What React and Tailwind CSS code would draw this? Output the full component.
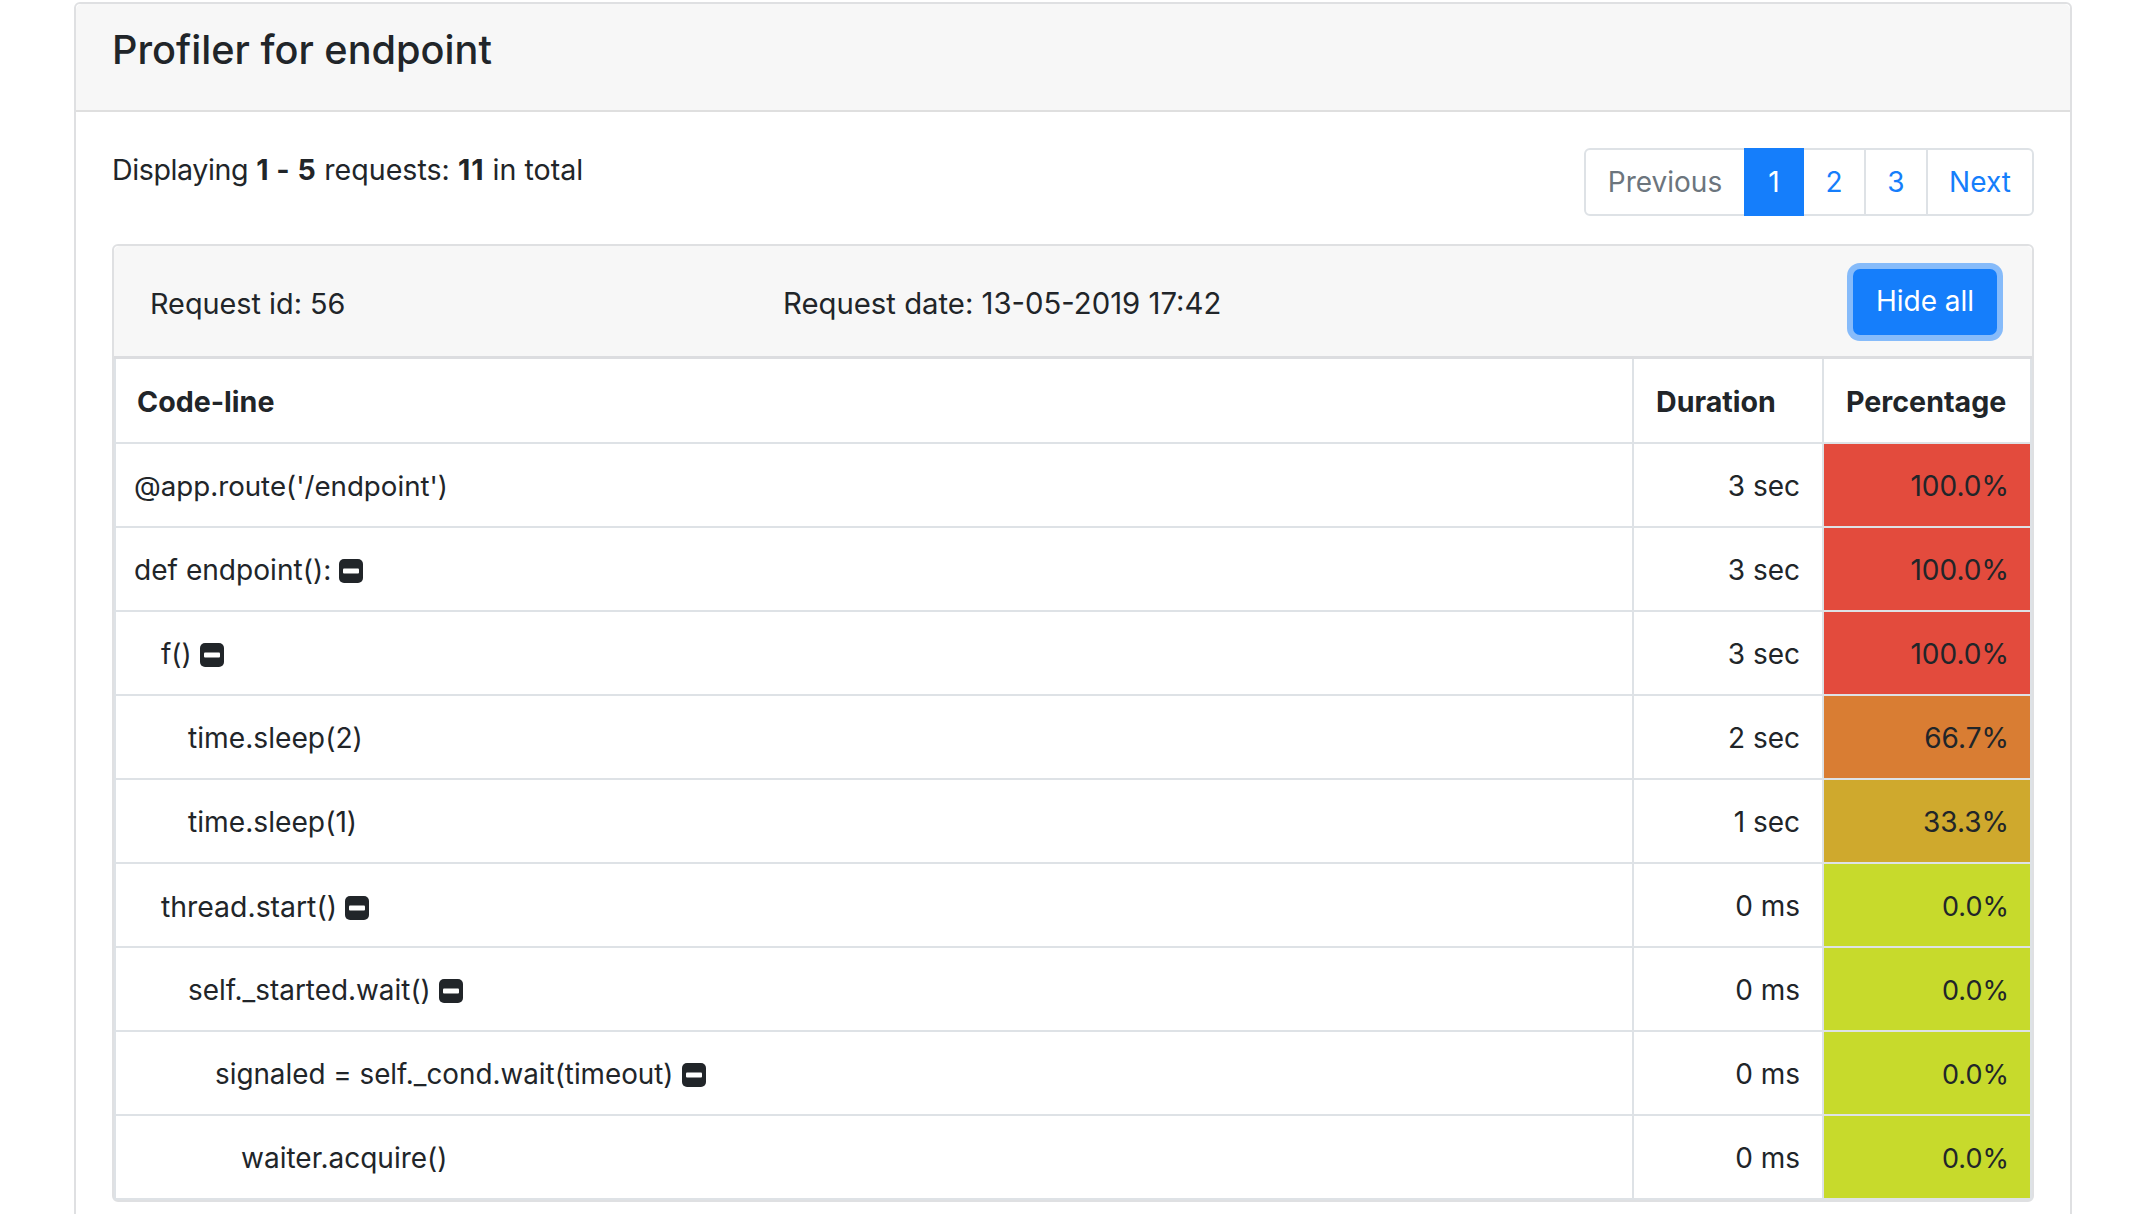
const rows = [
  { code: "@app.route('/endpoint')", depth: 0, dur: "3 sec", pct: "100.0%", bg: "bg-[#e34b3d]", size: "text-[27.7px]", pctSize: "text-[28px]" },
  { code: "def endpoint():", depth: 0, dur: "3 sec", pct: "100.0%", bg: "bg-[#e34b3d]", toggle: true, size: "text-[28.1px]", pctSize: "text-[28px]" },
  { code: "f()", depth: 1, dur: "3 sec", pct: "100.0%", bg: "bg-[#e34b3d]", toggle: true, size: "text-[28px]", pctSize: "text-[28px]" },
  { code: "time.sleep(2)", depth: 2, dur: "2 sec", pct: "66.7%", bg: "bg-[#d97d33]", size: "text-[28.2px]", pctSize: "text-[28px]" },
  { code: "time.sleep(1)", depth: 2, dur: "1 sec", pct: "33.3%", bg: "bg-[#cfa92d]", size: "text-[28.2px]", pctSize: "text-[28px]" },
  { code: "thread.start()", depth: 1, dur: "0 ms", pct: "0.0%", bg: "bg-[#c7da2c]", toggle: true, size: "text-[28.4px]", pctSize: "text-[27px]" },
  { code: "self._started.wait()", depth: 2, dur: "0 ms", pct: "0.0%", bg: "bg-[#c7da2c]", toggle: true, size: "text-[27.9px]", pctSize: "text-[27px]" },
  { code: "signaled = self._cond.wait(timeout)", depth: 3, dur: "0 ms", pct: "0.0%", bg: "bg-[#c7da2c]", toggle: true, size: "text-[27.8px]", pctSize: "text-[27px]" },
  { code: "waiter.acquire()", depth: 4, dur: "0 ms", pct: "0.0%", bg: "bg-[#c7da2c]", size: "text-[28px]", pctSize: "text-[27px]" },
];

const indents = ["pl-[18px]", "pl-[45px]", "pl-[72px]", "pl-[99px]", "pl-[125px]"];

function Minus() {
  return (
    <svg viewBox="0 0 24 24" className="inline-block w-[24px] h-[24px] ml-[8px] align-[-3px]">
      <rect x="0" y="0" width="24" height="24" rx="5" fill="#212529" />
      <rect x="4" y="9.5" width="16" height="5" rx="1" fill="#ffffff" />
    </svg>
  );
}

function PageItem({ children, className }) {
  return (
    <div className={"flex items-center justify-center h-full " + className}>{children}</div>
  );
}

export default function App() {
  return (
    <div className="h-[1214px] overflow-hidden bg-white text-[#212529] text-[28px] leading-[41px] font-['Inter','Noto_Sans',sans-serif]">
      <div className="ml-[74px] mt-[2px] w-[1998px] border-2 border-[#dfe0e2] rounded-[6px]">
        <div className="h-[108px] bg-[#f7f7f7] border-b-2 border-[#dfdfdf] pl-[36px] pt-[21px] rounded-t-[6px]">
          <h1 className="text-[39.7px] leading-[50px] font-medium">Profiler for endpoint</h1>
        </div>
        <div className="px-[36px] pt-[36px] pb-[40px]">
          <div className="flex justify-between items-start">
            <div className="text-[28.6px] mt-[1px]">
              <span className="tracking-[-0.4px]">Displaying</span>{" "}
              <b className="font-bold tracking-[0.5px]">1 - 5</b> requests:{" "}
              <b className="font-bold tracking-[1px]">11</b> in total
            </div>
            <div className="flex h-[68px] w-[450px] border-2 border-[#dee2e6] rounded-[6px] box-border text-[#157efb]">
              <PageItem className="w-[158px] text-[#6c757d]">Previous</PageItem>
              <PageItem className="w-[60px] bg-[#157efb] text-white -my-[2px] !h-[68px]">1</PageItem>
              <PageItem className="w-[62px] border-r-2 border-[#dee2e6]">2</PageItem>
              <PageItem className="w-[62px] border-r-2 border-[#dee2e6]">3</PageItem>
              <PageItem className="flex-1">Next</PageItem>
            </div>
          </div>
          <div className="mt-[28px] border-2 border-[#dfe0e2] rounded-[6px]">
            <div className="flex items-center h-[113px] bg-[#f7f7f7] border-b-[3px] border-[#dcdde0] rounded-t-[6px]">
              <div className="w-[669px] pl-[36px] pt-[4px] text-[28.8px]">Request id: 56</div>
              <div className="flex-1 pt-[4px] text-[29.3px]">Request date: 13-05-2019 17:42</div>
              <button className="w-[144px] h-[66px] mr-[35px] mt-[1px] bg-[#157efb] text-white rounded-[7px] ring-[6px] ring-[#86bbfa]">
                Hide all
              </button>
            </div>
            <table className="w-full border-collapse table-fixed border-x-2 border-b-2 border-[#dee2e6]">
              <colgroup>
                <col />
                <col className="w-[190px]" />
                <col className="w-[208px]" />
              </colgroup>
              <thead>
                <tr className="h-[84px]">
                  <th className="text-left font-bold text-[28.6px] pl-[21px] pt-[2px] border-b-2 border-[#dee2e6]">Code-line</th>
                  <th className="text-left font-bold text-[28.6px] pl-[22px] pt-[2px] border-2 border-t-0 border-[#dee2e6]">Duration</th>
                  <th className="text-left font-bold text-[28.6px] pl-[22px] pt-[2px] border-b-2 border-[#dee2e6]">Percentage</th>
                </tr>
              </thead>
              <tbody>
                {rows.map((r, i) => (
                  <tr key={i} className="h-[84px]">
                    <td className={"border-t-2 border-[#dee2e6] pt-[2px] " + r.size + " " + indents[r.depth]}>
                      {r.code}
                      {r.toggle && <Minus />}
                    </td>
                    <td className="text-right pr-[22px] pt-[2px] border-x-2 border-t-2 border-[#dee2e6]">{r.dur}</td>
                    <td className={"text-right pr-[21px] pt-[2px] border-t-2 border-[#dee2e6] " + r.pctSize + " " + r.bg}>{r.pct}</td>
                  </tr>
                ))}
              </tbody>
            </table>
          </div>
        </div>
      </div>
    </div>
  );
}
